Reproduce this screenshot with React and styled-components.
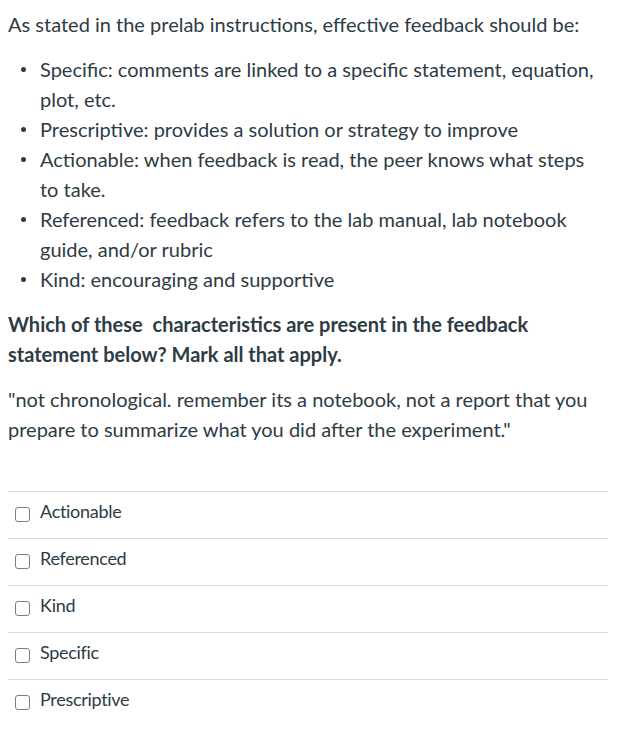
import React from "react";
import styled, { createGlobalStyle } from "styled-components";

const Global = createGlobalStyle`
  html, body { margin: 0; padding: 0; background: #fff; }
  body { font-family: Lato, "Noto Sans", sans-serif; color: #2d3b45; }
`;

const Page = styled.div`
  width: 600px;
  padding: 9px 0 0 8px;
  font-size: 20px;
  line-height: 30px;
`;

const Para = styled.p`
  margin: 0 0 15px 0;
  font-weight: ${(p) => (p.$bold ? 700 : 400)};
`;

const List = styled.ul`
  margin: 0 0 15px 0;
  padding: 0 8px 0 32px;
  list-style: none;
`;

const Item = styled.li`
  position: relative;
  &::before {
    content: "";
    position: absolute;
    left: -19px;
    top: 13px;
    width: 5px;
    height: 5px;
    border-radius: 50%;
    background: #2d3b45;
  }
`;

const Answers = styled.div`
  margin-top: 47px;
`;

const Row = styled.label`
  display: flex;
  align-items: flex-start;
  gap: 10px;
  height: 42px;
  border-top: 1px solid #dcdcdc;
  padding: 4px 0 0 7px;
`;

const Box = styled.span`
  box-sizing: border-box;
  width: 15px;
  height: 15px;
  border: 1px solid #7a7f84;
  border-radius: 3px;
  flex: none;
  margin-top: 11px;
`;

const Text = styled.span`
  font-size: 18px;
  letter-spacing: -0.3px;
`;

const items = ["Actionable", "Referenced", "Kind", "Specific", "Prescriptive"];

export default function App() {
  return (
    <>
      <Global />
      <Page>
        <Para>As stated in the prelab instructions, effective feedback should be:</Para>
        <List>
          <Item>Specific: comments are linked to a specific statement, equation, plot, etc.</Item>
          <Item>Prescriptive: provides a solution or strategy to improve</Item>
          <Item>Actionable: when feedback is read, the peer knows what steps to take.</Item>
          <Item>Referenced: feedback refers to the lab manual, lab notebook guide, and/or rubric</Item>
          <Item>Kind: encouraging and supportive</Item>
        </List>
        <Para $bold>Which of these&nbsp; characteristics are present in the feedback statement below? Mark all that apply.</Para>
        <Para>"not chronological. remember its a notebook, not a report that you prepare to summarize what you did after the experiment."</Para>
        <Answers>
          {items.map((t) => (
            <Row key={t}>
              <Box />
              <Text>{t}</Text>
            </Row>
          ))}
        </Answers>
      </Page>
    </>
  );
}
